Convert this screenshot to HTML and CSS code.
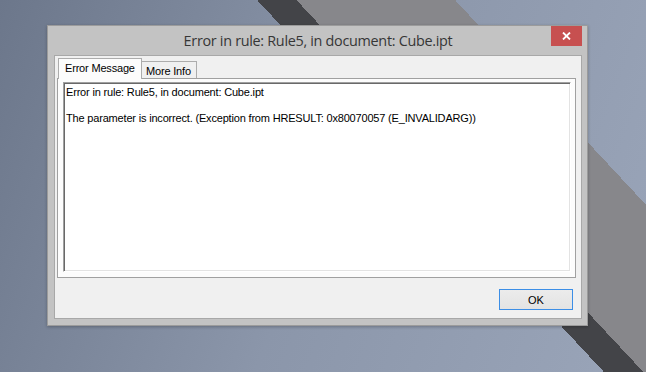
FILE: index.html
```html
<!DOCTYPE html>
<html lang="en">
<head>
<meta charset="utf-8">
<title>Error in rule</title>
<link rel="stylesheet" href="styles.css">
</head>
<body>
<div class="desktop">
  <div class="window">
    <div class="titlebar">
      <span class="title">Error in rule: Rule5, in document: Cube.ipt</span>
      <button class="close" aria-label="Close">
        <svg width="9" height="8" viewBox="0 0 9 8"><path d="M1 0.5 L8 7.5 M8 0.5 L1 7.5" stroke="#fff" stroke-width="1.8" fill="none"/></svg>
      </button>
    </div>
    <div class="client">
      <div class="tabs">
        <div class="tab active">Error Message</div>
        <div class="tab">More Info</div>
      </div>
      <div class="panel">
        <div class="textbox">
          <p>Error in rule: Rule5, in document: Cube.ipt</p>
          <p class="gap">The parameter is incorrect. (Exception from HRESULT: 0x80070057 (E_INVALIDARG))</p>
        </div>
      </div>
      <div class="footer">
        <button class="ok">OK</button>
      </div>
    </div>
  </div>
</div>
</body>
</html>
```
FILE: styles.css
```css
html, body {
  margin: 0;
  padding: 0;
}
body {
  font-family: "Liberation Sans", Arial, sans-serif;
  font-size: 11px;
  letter-spacing: -0.18px;
  color: #000;
}
.desktop {
  width: 646px;
  height: 372px;
  overflow: hidden;
  box-sizing: border-box;
  padding: 25px 0 0 47px;
  background:
    linear-gradient(47deg, transparent 441.7px, #434448 441.7px, #434448 470.5px, #87878b 470.5px, #87878b 586.5px, transparent 586.5px),
    linear-gradient(110deg, #6c778b 0%, #8b96aa 50%, #9aa5b9 100%);
}
.window {
  width: 541px;
  height: 301px;
  box-sizing: border-box;
  border: 1px solid #9b9b9b;
  background: #c3c3c3;
  padding: 0 5px 6px 6px;
  display: flex;
  flex-direction: column;
  box-shadow: 0 1px 3px rgba(0, 0, 0, 0.25);
}
.titlebar {
  height: 29px;
  display: grid;
  grid-template-columns: 1fr auto 1fr;
  align-items: start;
}
.title {
  grid-column: 2;
  font-family: "Open Sans", "Noto Sans", sans-serif;
  font-size: 14.4px;
  line-height: 30px;
  color: #363636;
  white-space: nowrap;
  letter-spacing: -0.3px;
}
.close {
  grid-column: 3;
  justify-self: end;
  width: 31px;
  height: 20px;
  border: 0;
  padding: 0;
  margin: 0;
  background: #c75050;
  display: flex;
  align-items: center;
  justify-content: center;
}
.client {
  flex: 1;
  border: 1px solid #a8a8a8;
  background: #f0f0f0;
  padding: 2px 5px 0 2px;
  display: flex;
  flex-direction: column;
}
.tabs {
  display: flex;
  align-items: flex-start;
  height: 20px;
  padding-left: 1px;
}
.tab {
  box-sizing: border-box;
  border: 1px solid #acacac;
  border-bottom: 0;
  white-space: nowrap;
}
.tab.active {
  position: relative;
  z-index: 1;
  width: 84px;
  height: 21px;
  background: #fcfcfc;
  padding: 3px 0 0 6px;
  line-height: 13px;
}
.tab:not(.active) {
  width: 55px;
  height: 17px;
  margin-top: 3px;
  background: #f0f0f0;
  border-left: 0;
  padding: 3px 0 0 4px;
  line-height: 13px;
}
.panel {
  width: 519px;
  height: 200px;
  box-sizing: border-box;
  border: 1px solid #a0a0a0;
  background: #fcfcfc;
  padding: 3px 4px 5px 5px;
}
.textbox {
  width: 508px;
  height: 190px;
  box-sizing: border-box;
  background: #fff;
  border-style: solid;
  border-width: 1px;
  border-color: #a0a0a0 #ffffff #ffffff #a0a0a0;
  box-shadow: inset 1px 1px 0 #696969, inset -1px -1px 0 #e3e3e3;
  padding: 3px 2px 0 2px;
  line-height: 13px;
}
.textbox p {
  margin: 0;
  white-space: nowrap;
}
.textbox p.gap {
  margin-top: 13px;
}
.footer {
  display: flex;
  justify-content: flex-end;
  padding: 11px 3px 8px 0;
}
.ok {
  width: 74px;
  height: 21px;
  box-sizing: border-box;
  border: 1px solid #3c8ee6;
  background: linear-gradient(#ececec, #e3e3e3);
  font-family: "Liberation Sans", Arial, sans-serif;
  font-size: 11px;
  color: #000;
  padding: 0;
  margin: 0;
}
```
